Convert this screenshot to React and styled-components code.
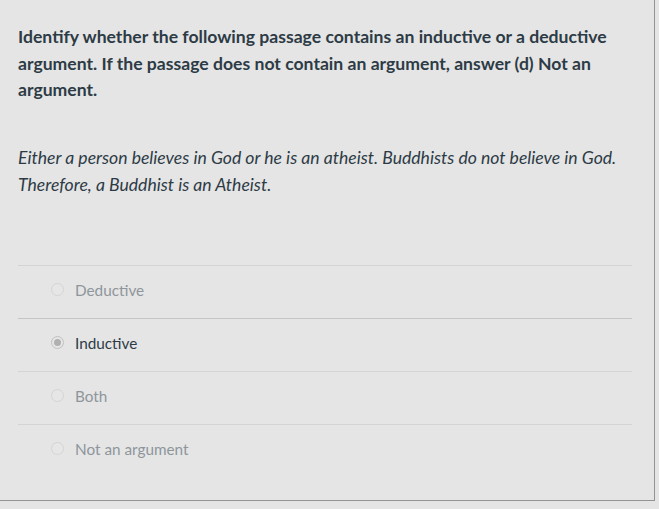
import React from "react";
import styled, { createGlobalStyle } from "styled-components";

const GlobalStyle = createGlobalStyle`
  html, body {
    margin: 0;
    padding: 0;
    background: #e5e5e5;
  }
  body {
    font-family: Lato, "Open Sans", sans-serif;
    color: #2d3b45;
  }
`;

const Panel = styled.div`
  box-sizing: border-box;
  width: 655px;
  height: 501px;
  background: #e5e5e5;
  border-right: 1px solid #949494;
  border-bottom: 1px solid #949494;
  padding: 24px 22px 0 18px;
`;

const Question = styled.p`
  margin: 0;
  font-size: 17.6px;
  font-weight: 700;
  line-height: 26.5px;
  color: #2d3b45;
`;

const Passage = styled.p`
  margin: 40px 0 0;
  font-size: 17.6px;
  font-style: italic;
  line-height: 27px;
  color: #2d3b45;
`;

const Options = styled.div`
  margin-top: 67px;
  display: flex;
  flex-direction: column;
`;

const Option = styled.label`
  display: flex;
  align-items: center;
  gap: 11px;
  height: 53px;
  padding: 0 0 4px 33px;
  border-top: 1px solid ${(p) => (p.selected ? "#c4c4c4" : "#d4d4d4")};
  font-size: 15.3px;
  color: ${(p) => (p.selected ? "#2d3b45" : "#8e969c")};
  box-sizing: border-box;
`;

const Radio = styled.span`
  position: relative;
  width: 13px;
  height: 13px;
  border-radius: 50%;
  border: 1px solid ${(p) => (p.checked ? "#c0c0c0" : "#d4d4d4")};
  background: #e6e6e6;
  box-sizing: border-box;
  flex-shrink: 0;
  margin-top: -1px;

  &::after {
    content: "";
    display: ${(p) => (p.checked ? "block" : "none")};
    position: absolute;
    left: 2px;
    top: 2px;
    width: 7px;
    height: 7px;
    border-radius: 50%;
    background: #b0b0b0;
  }
`;

const options = [
  { label: "Deductive" },
  { label: "Inductive", selected: true },
  { label: "Both" },
  { label: "Not an argument" },
];

export default function App() {
  return (
    <>
      <GlobalStyle />
      <Panel>
        <Question>
          Identify whether the following passage contains an inductive or a
          deductive argument. If the passage does not contain an argument,
          answer (d) Not an argument.
        </Question>
        <Passage>
          Either a person believes in God or he is an atheist. Buddhists do not
          believe in God. Therefore, a Buddhist is an Atheist.
        </Passage>
        <Options>
          {options.map((o) => (
            <Option key={o.label} selected={o.selected}>
              <Radio checked={o.selected} />
              {o.label}
            </Option>
          ))}
        </Options>
      </Panel>
    </>
  );
}
